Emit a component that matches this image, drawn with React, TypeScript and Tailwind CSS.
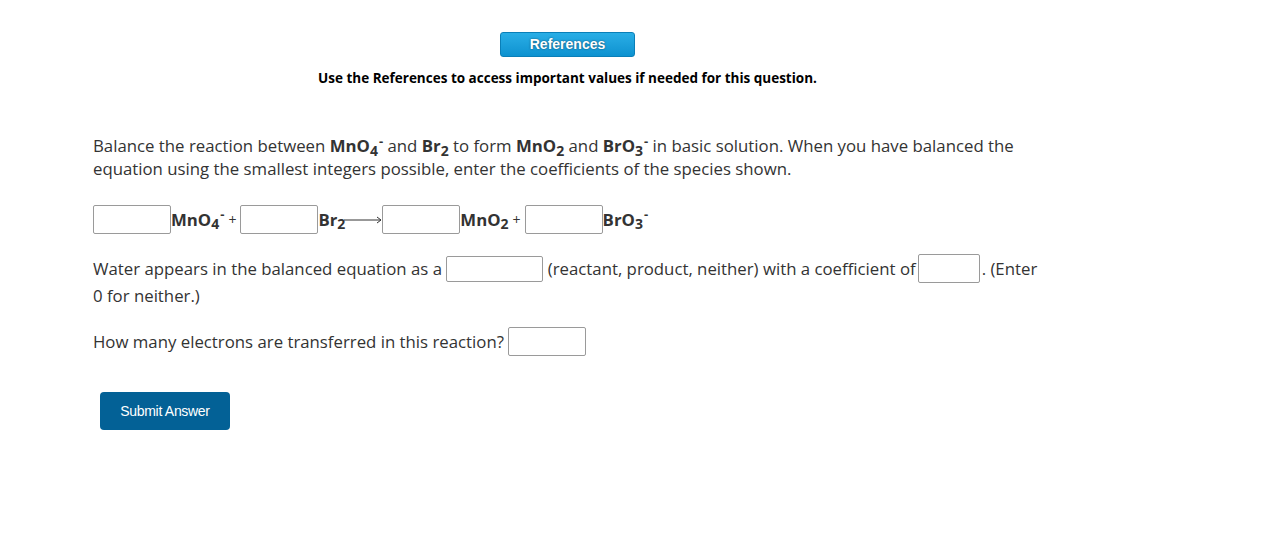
import React from 'react'

const box = 'inline-block align-middle border border-[#9a9a9a] rounded-[2px] bg-white'

function Sp({ base, sub, sup }: { base: string; sub: string; sup?: boolean }) {
  return (
    <b className="font-bold">
      {base}
      <sub className="text-[14px]">{sub}</sub>
      {sup && <sup className="text-[13px] ml-[1px]">-</sup>}
    </b>
  )
}

export default function App() {
  return (
    <div className="min-h-[547px] bg-white text-[#333] font-['Open_Sans',sans-serif]">
      {/* header */}
      <div className="w-[1135px] pt-[32px] flex flex-col items-center">
        <button
          type="button"
          className="w-[135px] h-[25px] rounded-[3px] border border-[#0a7fb8] bg-gradient-to-b from-[#29aee6] to-[#0c92d0] text-white text-[14px] font-bold font-['Liberation_Sans',sans-serif] [text-shadow:0_0_2px_rgba(0,0,0,0.55)]"
        >
          References
        </button>
        <p className="mt-[11px] text-[13.5px] leading-[20px] font-bold text-black">
          Use the References to access important values if needed for this question.
        </p>
      </div>

      <div className="pl-[93px] pt-[46px] w-[1050px] text-[16.8px] leading-[23px]">
        <p>
          Balance the reaction between <Sp base="MnO" sub="4" sup /> and <Sp base="Br" sub="2" /> to form{' '}
          <Sp base="MnO" sub="2" /> and <Sp base="BrO" sub="3" sup /> in basic solution. When you have balanced the
          equation using the smallest integers possible, enter the coefficients of the species shown.
        </p>

        {/* equation */}
        <div className="mt-[24px] flex items-center h-[30px]">
          <span className={`${box} w-[78px] h-[29px]`} />
          <Sp base="MnO" sub="4" sup />
          <span className="text-[14px] ml-[4px] mr-[4px]">+</span>
          <span className={`${box} w-[78px] h-[29px]`} />
          <Sp base="Br" sub="2" />
          <svg width="38" height="10" viewBox="0 0 38 10" className="-ml-[1px] mt-[2px]">
            <line x1="0" y1="5" x2="37" y2="5" stroke="#333" strokeWidth="1" />
            <path d="M33 2 L37 5 L33 8" fill="none" stroke="#333" strokeWidth="1" />
          </svg>
          <span className={`${box} w-[78px] h-[29px]`} />
          <Sp base="MnO" sub="2" />
          <span className="text-[14px] ml-[4px] mr-[4px]">+</span>
          <span className={`${box} w-[78px] h-[29px]`} />
          <Sp base="BrO" sub="3" sup />
        </div>

        <p className="mt-[22px] leading-[26px]">
          Water appears in the balanced equation as a{' '}
          <span className={`${box} w-[97px] h-[26px] -mt-[4px]`} /> (reactant, product, neither) with a coefficient of
          <span className={`${box} w-[62px] h-[29px] -mt-[4px] mx-[2px]`} />. (Enter 0 for neither.)
        </p>

        <p className="mt-[18px] flex items-center gap-[4px]">
          How many electrons are transferred in this reaction?
          <span className={`${box} w-[78px] h-[29px]`} />
        </p>

        <button
          type="button"
          className="mt-[36px] ml-[7px] w-[130px] h-[38px] rounded-[4px] bg-[#036196] text-white text-[14px] font-['Liberation_Sans',sans-serif] tracking-[-0.3px]"
        >
          Submit Answer
        </button>
      </div>
    </div>
  )
}
